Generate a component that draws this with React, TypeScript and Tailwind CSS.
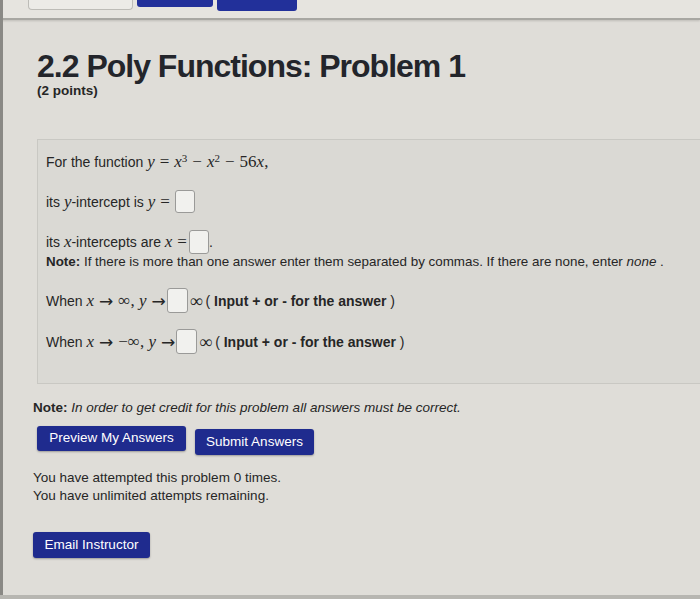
import React from "react";

const serif = { fontFamily: '"Liberation Serif", "DejaVu Serif", serif' };

const M = ({ children }: { children: React.ReactNode }) => (
  <span className="italic text-[17px]" style={serif}>{children}</span>
);
const R = ({ children }: { children: React.ReactNode }) => (
  <span className="text-[17px]" style={serif}>{children}</span>
);
const Op = ({ children }: { children: React.ReactNode }) => (
  <span className="mx-[5px] text-[17px]" style={serif}>{children}</span>
);
const Arrow = () => (
  <span className="mx-[5px] text-[17px]" style={{ fontFamily: '"DejaVu Sans", sans-serif' }}>→</span>
);

const Box = ({ cls }: { cls: string }) => (
  <span className={`inline-block align-middle rounded-[3px] border border-[#9a9a98] bg-[#f1f1ee] ${cls}`} />
);

export default function App() {
  return (
    <div
      className="relative w-[700px] h-[599px] overflow-hidden bg-[#dfddd8] text-[#262626]"
      style={{ fontFamily: '"Liberation Sans", Arial, sans-serif' }}
    >
      {/* left dark edge */}
      <div className="absolute left-0 top-0 h-full w-[3px] bg-[#8a8985]" />
      {/* top bar */}
      <div className="flex h-[20px] items-start border-b-2 border-[#a8a7a2] bg-[#e6e4df] pl-[28px] shadow-[0_1px_2px_rgba(0,0,0,0.15)]">
        <div className="h-[10px] w-[105px] rounded-b-[4px] border border-t-0 border-[#bdbcb7] bg-[#ecebe7]" />
        <div className="ml-[4px] h-[7px] w-[76px] rounded-b-[3px] bg-[#22309a]" />
        <div className="ml-[4px] h-[11px] w-[80px] rounded-b-[3px] bg-[#22309a]" />
      </div>

      <div className="pl-[37px] pt-[28px]">
        <h1 className="text-[32px] font-bold leading-[36px] tracking-[-1px] text-[#23252b]">
          2.2 Poly Functions: Problem 1
        </h1>
        <div className="mt-[-1px] text-[13.5px] font-semibold leading-[16px]">(2 points)</div>
      </div>

      {/* problem box */}
      <div className="ml-[37px] mt-[40px] h-[245px] border-t border-l border-b border-[#c9c8c3] bg-[#dad9d4] pl-[8px] pt-[12px] text-[14px]">
        <div className="flex items-baseline leading-[20px]">
          <span>For the function&nbsp;</span>
          <M>y</M>
          <Op>=</Op>
          <M>x</M>
          <sup className="text-[11px]" style={serif}>3</sup>
          <Op>−</Op>
          <M>x</M>
          <sup className="text-[11px]" style={serif}>2</sup>
          <Op>−</Op>
          <R>56</R>
          <M>x</M>
          <R>,</R>
        </div>
        <div className="mt-[18px] flex items-center leading-[20px]">
          <span>its&nbsp;</span>
          <M>y</M>
          <span>-intercept is&nbsp;</span>
          <M>y</M>
          <Op>=</Op>
          <Box cls="ml-[0px] h-[23px] w-[20px]" />
        </div>
        <div className="mt-[17px] flex items-center leading-[20px]">
          <span>its&nbsp;</span>
          <M>x</M>
          <span>-intercepts are&nbsp;</span>
          <M>x</M>
          <Op>=</Op>
          <Box cls="ml-[-3px] h-[24px] w-[20px]" />
          <span>.</span>
        </div>
        <div className="mt-[-1px] text-[13.4px] leading-[18px]">
          <b>Note:</b> If there is more than one answer enter them separated by commas. If there are none, enter{" "}
          <i>none</i> .
        </div>
        <div className="mt-[17px] flex items-center leading-[20px]">
          <span>When&nbsp;</span>
          <M>x</M>
          <Arrow />
          <R>∞</R>
          <R>,&nbsp;</R>
          <M>y</M>
          <Arrow />
          <Box cls="ml-[-4px] h-[25px] w-[21px]" />
          <span className="ml-[2px] text-[18px]" style={serif}>∞</span>
          <span className="ml-[3px]">( <b>Input + or - for the answer</b> )</span>
        </div>
        <div className="mt-[16px] flex items-center leading-[20px]">
          <span>When&nbsp;</span>
          <M>x</M>
          <Arrow />
          <R>−∞</R>
          <R>,&nbsp;</R>
          <M>y</M>
          <Arrow />
          <Box cls="ml-[-4px] h-[25px] w-[21px]" />
          <span className="ml-[2px] text-[18px]" style={serif}>∞</span>
          <span className="ml-[3px]">( <b>Input + or - for the answer</b> )</span>
        </div>
      </div>

      <div className="pl-[33px] pt-[15px] text-[13.5px] leading-[18px]">
        <b>Note:</b> <i>In order to get credit for this problem all answers must be correct.</i>
      </div>
      <div className="mt-[9px] flex items-start gap-[9px] pl-[37px]">
        <button className="h-[25px] w-[149px] rounded-[3px] bg-[#1f2b8e] text-[13.5px] text-white shadow-[0_1px_2px_rgba(0,0,0,0.3)]">
          Preview My Answers
        </button>
        <button className="mt-[3px] h-[26px] w-[119px] rounded-[3px] bg-[#1f2b8e] text-[13.5px] text-white shadow-[0_1px_2px_rgba(0,0,0,0.3)]">
          Submit Answers
        </button>
      </div>
      <div className="pl-[33px] pt-[14px] text-[13.5px] leading-[18px]">
        <div>You have attempted this problem 0 times.</div>
        <div>You have unlimited attempts remaining.</div>
      </div>
      <div className="pl-[33px] pt-[27px]">
        <button className="h-[26px] w-[117px] rounded-[3px] bg-[#1f2b8e] text-[13.5px] text-white shadow-[0_1px_2px_rgba(0,0,0,0.3)]">
          Email Instructor
        </button>
      </div>
      <div className="absolute bottom-0 left-0 h-[4px] w-full bg-[#b7b6b1]" />
    </div>
  );
}
